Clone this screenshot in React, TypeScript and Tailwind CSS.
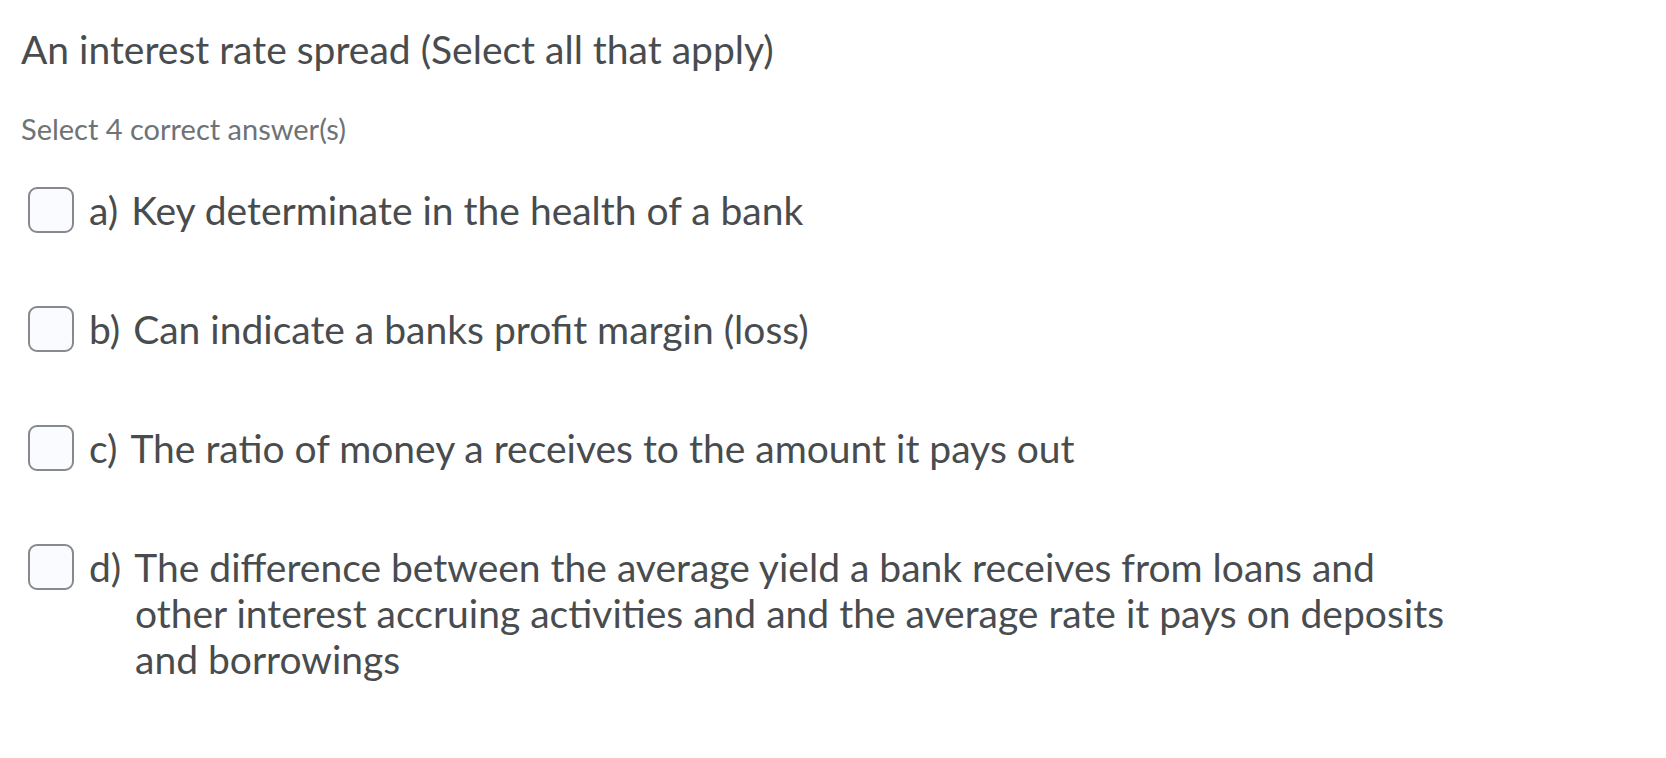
export default function App() {
  const options = [
    { label: "a)", text: "Key determinate in the health of a bank" },
    { label: "b)", text: "Can indicate a banks profit margin (loss)" },
    { label: "c)", text: "The ratio of money a receives to the amount it pays out" },
    {
      label: "d)",
      text: "The difference between the average yield a bank receives from loans and other interest accruing activities and and the average rate it pays on deposits and borrowings",
    },
  ];
  return (
    <div className="w-[1666px] h-[758px] bg-white text-[#494c4e] overflow-hidden" style={{ fontFamily: "Lato, 'Open Sans', sans-serif" }}>
      <div className="pl-[21px] pt-[26px]">
        <h1 className="text-[39px] leading-[46px] font-normal">An interest rate spread (Select all that apply)</h1>
        <p className="mt-[41px] text-[29px] leading-[32px] text-[#6e7376]">Select 4 correct answer(s)</p>
        <div className="mt-[42px] flex flex-col gap-[73px]">
          {options.map((o) => (
            <div key={o.label} className="flex items-start">
              <div className="ml-[7px] w-[46px] h-[46px] shrink-0 rounded-[9px] border-[2px] border-[#878a8c] bg-[#f9fbff]" />
              <p className="ml-[15px] pl-[46px] indent-[-46px] max-w-[1376px] text-[39px] leading-[46px]">
                <span className="mr-[13px]">{o.label}</span>
                {o.text}
              </p>
            </div>
          ))}
        </div>
      </div>
    </div>
  );
}
